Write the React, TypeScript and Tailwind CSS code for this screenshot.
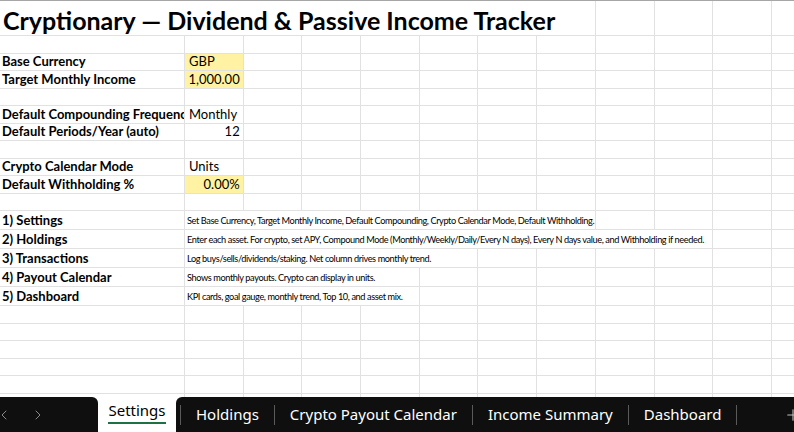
import { ChevronLeft, ChevronRight, Plus } from "lucide-react";

type Row = {
  h: string;
  a?: string;
  b?: string;
  bRight?: boolean;
  bYellow?: boolean;
  desc?: string;
  span?: number;
  title?: boolean;
};

const COLS = 11;

const rows: Row[] = [
  { h: "h-[35px]", title: true },
  { h: "h-[17.5px]" },
  { h: "h-[17.5px]", a: "Base Currency", b: "GBP", bYellow: true },
  { h: "h-[17.5px]", a: "Target Monthly Income", b: "1,000.00", bRight: true, bYellow: true },
  { h: "h-[17.5px]" },
  { h: "h-[17.5px]", a: "Default Compounding Frequency", b: "Monthly" },
  { h: "h-[17.5px]", a: "Default Periods/Year (auto)", b: "12", bRight: true },
  { h: "h-[17.5px]" },
  { h: "h-[17.5px]", a: "Crypto Calendar Mode", b: "Units" },
  { h: "h-[17.5px]", a: "Default Withholding %", b: "0.00%", bRight: true, bYellow: true },
  { h: "h-[17.5px]" },
  {
    h: "h-[19px]",
    a: "1) Settings",
    span: 7,
    desc: "Set Base Currency, Target Monthly Income, Default Compounding, Crypto Calendar Mode, Default Withholding.",
  },
  {
    h: "h-[19px]",
    a: "2) Holdings",
    span: 9,
    desc: "Enter each asset. For crypto, set APY, Compound Mode (Monthly/Weekly/Daily/Every N days), Every N days value, and Withholding if needed.",
  },
  {
    h: "h-[19px]",
    a: "3) Transactions",
    span: 5,
    desc: "Log buys/sells/dividends/staking. Net column drives monthly trend.",
  },
  {
    h: "h-[19px]",
    a: "4) Payout Calendar",
    span: 4,
    desc: "Shows monthly payouts. Crypto can display in units.",
  },
  {
    h: "h-[19px]",
    a: "5) Dashboard",
    span: 4,
    desc: "KPI cards, goal gauge, monthly trend, Top 10, and asset mix.",
  },
  { h: "h-[17.5px]" },
  { h: "h-[17.5px]" },
  { h: "h-[17.5px]" },
  { h: "h-[17.5px]" },
  { h: "h-[17.5px]" },
  { h: "h-[17.5px]" },
];

const line = "border-r border-b border-[#e1e1e1]";
const cell = `${line} overflow-hidden`;

function SheetRow({ r }: { r: Row }) {
  if (r.title) {
    return (
      <div className={`grid grid-cols-[185px_repeat(11,58.7px)] ${r.h}`}>
        <div className={`${line} col-span-8 flex items-end whitespace-nowrap pl-[3px] pb-[2px] text-[25px] font-bold leading-none text-black`}>
          Cryptionary — Dividend &amp; Passive Income Tracker
        </div>
        {Array.from({ length: 4 }).map((_, i) => (
          <div key={i} className={cell} />
        ))}
      </div>
    );
  }

  const rest = r.desc ? COLS - (r.span ?? 1) : r.b !== undefined ? COLS - 1 : COLS;

  return (
    <div className={`grid grid-cols-[185px_repeat(11,58.7px)] ${r.h}`}>
      <div className={`${cell} flex items-end whitespace-nowrap pl-[2px] pb-[2px] text-[13px] font-bold leading-none text-black`}>
        {r.a}
      </div>
      {r.b !== undefined && (
        <div
          className={`${cell} flex items-end whitespace-nowrap pb-[2px] text-[13px] leading-none text-black ${
            r.bRight ? "justify-end pr-[3px]" : "pl-[4px]"
          } ${r.bYellow ? "bg-[#fff3a3]" : ""}`}
        >
          {r.b}
        </div>
      )}
      {r.desc && (
        <div
          className={`${line} flex items-end whitespace-nowrap pl-[2px] pb-[4px] text-[9.2px] leading-none tracking-[-0.4px] text-black`}
          style={{ gridColumn: `span ${r.span} / span ${r.span}` }}
        >
          {r.desc}
        </div>
      )}
      {Array.from({ length: rest }).map((_, i) => (
        <div key={i} className={cell} />
      ))}
    </div>
  );
}

const tabs = ["Holdings", "Crypto Payout Calendar", "Income Summary", "Dashboard"];

export default function App() {
  return (
    <div className="flex h-[432px] w-[794px] flex-col overflow-hidden bg-white font-['Lato',sans-serif]">
      <div className="h-[397px] overflow-hidden border-t border-[#a6a6a6]">
        {rows.map((r, i) => (
          <SheetRow key={i} r={r} />
        ))}
      </div>

      {/* sheet tabs */}
      <div className="flex h-[35px] bg-white font-['Noto_Sans',sans-serif] text-[15px]">
        <div className="flex w-[98px] items-center rounded-tr-[6px] bg-[#0f0f0f] text-[#8a8a8a]">
          <ChevronLeft className="ml-[-4px] h-[16px] w-[16px]" strokeWidth={1.5} />
          <ChevronRight className="ml-[18px] h-[16px] w-[16px]" strokeWidth={1.5} />
        </div>
        <div className="relative flex h-[31px] w-[78px] items-center justify-center rounded-b-[6px] bg-white text-black">
          <span className="mt-[-4px]">Settings</span>
          <div className="absolute bottom-[4px] left-[10px] h-[2px] w-[58px] bg-[#1e7145]" />
        </div>
        <div className="flex flex-1 items-center rounded-tl-[6px] bg-[#0f0f0f] pl-[4px] text-white">
          <div className="h-[20px] w-px bg-[#5a5a5a]" />
          {tabs.map((t) => (
            <div key={t} className="flex items-center">
              <span className="px-[15px]">{t}</span>
              <div className="h-[20px] w-px bg-[#5a5a5a]" />
            </div>
          ))}
          <Plus className="ml-auto mr-[-8px] h-[18px] w-[18px] text-[#bdbdbd]" strokeWidth={1.5} />
        </div>
      </div>
    </div>
  );
}
